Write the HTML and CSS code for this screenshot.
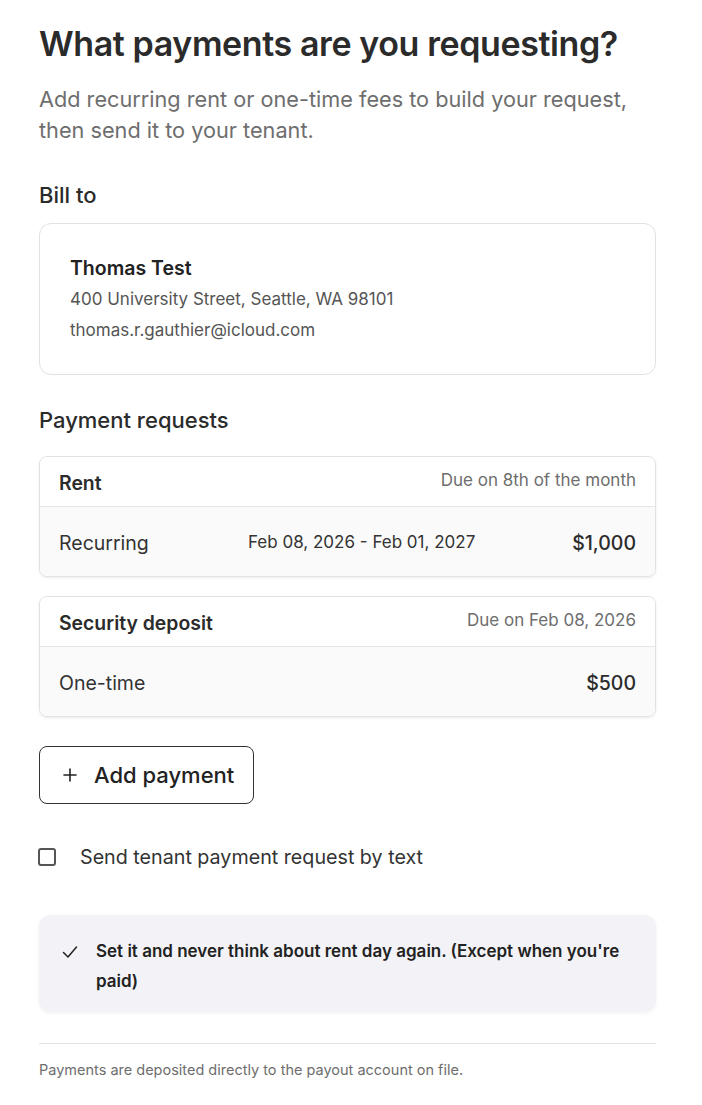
FILE: index.html
```html
<!DOCTYPE html>
<html lang="en">
<head>
    <meta charset="UTF-8">
    <meta name="viewport" content="width=device-width, initial-scale=1.0">
    <title>Payment requests</title>
    <link rel="stylesheet" href="styles.css">
</head>
<body>
    <div class="page">
        <h1 class="title">What payments are you requesting?</h1>
        <p class="subtitle">Add recurring rent or one-time fees to build your request, then send it to your tenant.</p>

        <h2 class="section-title">Bill to</h2>
        <div class="bill-card">
            <div class="bill-name">Thomas Test</div>
            <div class="bill-line">400 University Street, Seattle, WA 98101</div>
            <div class="bill-line">thomas.r.gauthier@icloud.com</div>
        </div>

        <h2 class="section-title section-gap">Payment requests</h2>
        <div class="request-card">
            <div class="request-head">
                <span class="request-name">Rent</span>
                <span class="request-due">Due on 8th of the month</span>
            </div>
            <div class="request-body">
                <span class="request-type">Recurring</span>
                <span class="request-dates">Feb 08, 2026 - Feb 01, 2027</span>
                <span class="request-amount">$1,000</span>
            </div>
        </div>
        <div class="request-card">
            <div class="request-head">
                <span class="request-name">Security deposit</span>
                <span class="request-due">Due on Feb 08, 2026</span>
            </div>
            <div class="request-body">
                <span class="request-type">One-time</span>
                <span class="request-amount">$500</span>
            </div>
        </div>

        <button class="add-btn" type="button">
            <svg width="14" height="14" viewBox="0 0 14 14" fill="none" stroke="#222" stroke-width="1.6" stroke-linecap="round"><path d="M7 1v12M1 7h12"/></svg>
            Add payment
        </button>

        <label class="sms-check">
            <span class="box"></span>
            Send tenant payment request by text
        </label>

        <div class="tip">
            <svg class="tip-icon" width="16" height="14" viewBox="0 0 16 14" fill="none" stroke="#222" stroke-width="1.5" stroke-linecap="round" stroke-linejoin="round"><path d="M1.5 7.5l4.5 4.5 8.5-10"/></svg>
            <p>Set it and never think about rent day again. (Except when you're paid)</p>
        </div>

        <div class="footer">Payments are deposited directly to the payout account on file.</div>
    </div>
</body>
</html>
```

FILE: styles.css
```css
body {
    font-family: Inter, "Noto Sans", sans-serif;
    background-color: #fff;
    color: #2b2b2b;
    margin: 0;
    padding: 0;
}
.page {
    width: 617px;
    padding: 22px 0 20px 39px;
}
.title {
    font-size: 34px;
    font-weight: 600;
    letter-spacing: -0.4px;
    line-height: 44px;
    margin: 0;
    color: #2b2b2b;
}
.subtitle {
    font-size: 21.7px;
    line-height: 31px;
    color: #6e6e6e;
    margin: 18px 0 0;
}
.section-title {
    font-size: 22px;
    font-weight: 500;
    line-height: 28px;
    margin: 35px 0 14px;
    color: #2b2b2b;
}
.section-gap {
    margin-top: 31px;
    margin-bottom: 22px;
}
.bill-card {
    border: 1px solid #e2e2e2;
    border-radius: 12px;
    padding: 31px 30px 28px;
}
.bill-name {
    font-size: 19.5px;
    font-weight: 600;
    line-height: 26px;
    color: #222;
    margin-bottom: 3px;
}
.bill-line {
    font-size: 17px;
    line-height: 31px;
    color: #555;
}
.request-card {
    border: 1px solid #e2e2e2;
    border-radius: 8px;
    overflow: hidden;
    box-shadow: 0 1px 3px rgba(0, 0, 0, 0.08);
    margin-bottom: 19px;
}
.request-head {
    display: flex;
    justify-content: space-between;
    align-items: center;
    height: 49px;
    padding: 0 19px;
    border-bottom: 1px solid #e6e6e6;
    background: #fff;
}
.request-name {
    font-size: 19.4px;
    font-weight: 600;
    color: #2b2b2b;
    margin-top: 2px;
}
.request-due {
    font-size: 17px;
    color: #6e6e6e;
    margin-top: -4px;
}
.request-body {
    display: flex;
    justify-content: space-between;
    align-items: center;
    height: 69px;
    padding: 3px 19px 0;
    box-sizing: border-box;
    background: #fafafa;
}
.request-type {
    font-size: 19.5px;
    color: #333;
    width: 189px;
}
.request-dates {
    font-size: 17px;
    color: #333;
    flex: 1;
    margin-top: -2px;
}
.request-amount {
    font-size: 19.5px;
    font-weight: 500;
    color: #2b2b2b;
}
.add-btn {
    display: flex;
    align-items: center;
    gap: 17px;
    height: 58px;
    padding: 0 19px 0 23px;
    margin-top: 29px;
    background: #fff;
    border: 1px solid #333;
    border-radius: 8px;
    font-family: Inter, "Noto Sans", sans-serif;
    font-size: 22px;
    font-weight: 500;
    color: #222;
    cursor: pointer;
}
.sms-check {
    display: flex;
    align-items: center;
    gap: 24px;
    margin: 41px 0 0 -1px;
    font-size: 19.7px;
    line-height: 24px;
    color: #333;
}
.box {
    width: 14px;
    height: 14px;
    border: 2px solid #555;
    border-radius: 3px;
}
.tip {
    display: flex;
    align-items: flex-start;
    gap: 18px;
    background: #f3f3f7;
    border-radius: 12px;
    box-shadow: 0 1px 4px rgba(0, 0, 0, 0.06);
    padding: 21px 30px 16px 23px;
    margin-top: 46px;
}
.tip-icon {
    margin-top: 9px;
    flex-shrink: 0;
}
.tip p {
    margin: 0;
    font-size: 17px;
    font-weight: 600;
    line-height: 30px;
    color: #222;
}
.footer {
    border-top: 1px solid #e2e2e2;
    margin-top: 31px;
    padding-top: 17px;
    font-size: 14.5px;
    color: #6e6e6e;
}
```
